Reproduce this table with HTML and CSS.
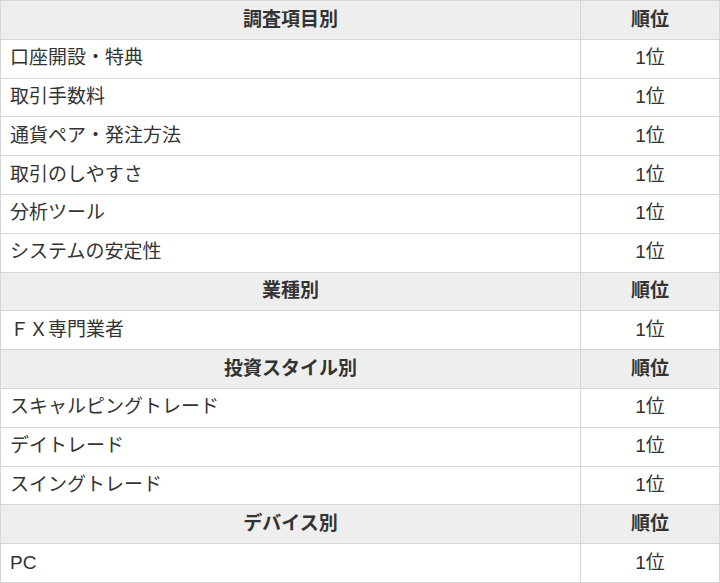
FILE: index.html
```html
<!DOCTYPE html>
<html lang="ja">
<head>
<meta charset="utf-8">
<link rel="stylesheet" href="styles.css">
</head>
<body>
<table class="rank">
  <tr class="head"><th class="item">調査項目別</th><th class="pos">順位</th></tr>
  <tr><td class="item">口座開設・特典</td><td class="pos">1位</td></tr>
  <tr><td class="item">取引手数料</td><td class="pos">1位</td></tr>
  <tr><td class="item">通貨ペア・発注方法</td><td class="pos">1位</td></tr>
  <tr><td class="item">取引のしやすさ</td><td class="pos">1位</td></tr>
  <tr><td class="item">分析ツール</td><td class="pos">1位</td></tr>
  <tr><td class="item">システムの安定性</td><td class="pos">1位</td></tr>
  <tr class="head"><th class="item">業種別</th><th class="pos">順位</th></tr>
  <tr><td class="item">ＦＸ専門業者</td><td class="pos">1位</td></tr>
  <tr class="head"><th class="item">投資スタイル別</th><th class="pos">順位</th></tr>
  <tr><td class="item">スキャルピングトレード</td><td class="pos">1位</td></tr>
  <tr><td class="item">デイトレード</td><td class="pos">1位</td></tr>
  <tr><td class="item">スイングトレード</td><td class="pos">1位</td></tr>
  <tr class="head"><th class="item">デバイス別</th><th class="pos">順位</th></tr>
  <tr><td class="item">PC</td><td class="pos">1位</td></tr>
</table>
</body>
</html>
```
FILE: styles.css
```css
html, body {
  margin: 0;
  padding: 0;
  background: #fff;
}
.rank {
  width: 720px;
  height: 583px;
  border-collapse: collapse;
  table-layout: fixed;
  font-family: "Liberation Sans", "Noto Sans CJK JP", sans-serif;
  font-size: 19px;
  color: #333;
}
.rank th, .rank td {
  border: 1px solid #d6d6d6;
  padding: 0 9px;
  line-height: 1.2;
}
.rank .head th {
  background: #eeeeee;
  font-weight: bold;
  text-align: center;
}
.rank .item {
  width: 561px;
  text-align: left;
}
.rank th.item {
  text-align: center;
}
.rank .pos {
  text-align: center;
}
```
